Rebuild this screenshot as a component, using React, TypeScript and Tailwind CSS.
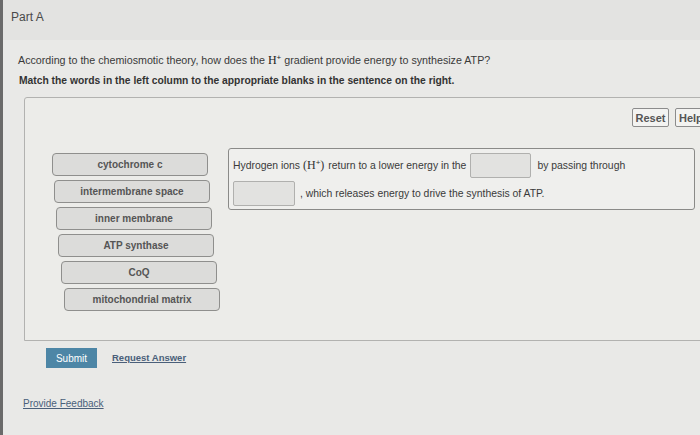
export default function App() {
  const items = [
    { label: 'cytochrome c', ml: 'ml-[0px]' },
    { label: 'intermembrane space', ml: 'ml-[2px]' },
    { label: 'inner membrane', ml: 'ml-[4px]' },
    { label: 'ATP synthase', ml: 'ml-[6px]' },
    { label: 'CoQ', ml: 'ml-[9px]' },
    { label: 'mitochondrial matrix', ml: 'ml-[12px]' },
  ];

  return (
    <div className="w-[700px] h-[435px] overflow-hidden flex bg-[#e9e9e7] font-['Liberation_Sans',Arial,sans-serif] text-[#333]">
      <div className="w-[3px] shrink-0 bg-[#6a6a6a]" />
      <div className="flex-1 flex flex-col min-w-0">
        {/* header */}
        <div className="h-[40px] shrink-0 bg-[#e3e3e1] pl-[8px] pt-[8px] text-[12px] text-[#4a4a4a]">
          Part A
        </div>

        <div className="pl-[15px] pt-[11px] text-[10.7px] text-[#3a3a3a]">
          According to the chemiosmotic theory, how does the{' '}
          <span className="font-['Liberation_Serif',serif] text-[12px] text-[#222]">
            H<sup className="text-[8px] font-['Liberation_Sans',sans-serif]">+</sup>
          </span>{' '}
          gradient provide energy to synthesize ATP?
        </div>
        <div className="pl-[16px] pt-[4px] text-[10.3px] font-bold text-[#333]">
          Match the words in the left column to the appropriate blanks in the sentence on the right.
        </div>

        {/* main box */}
        <div className="ml-[21px] mt-[9px] h-[244px] w-[700px] border border-[#b2b2b0] rounded-tl-[3px] bg-[#ecece9] flex flex-col">
          <div className="flex justify-end gap-[6px] pt-[10px] pr-[16px]">
            <div className="border border-[#8c8c8c] rounded-[2px] bg-[#f3f3f1] w-[37px] h-[19px] flex items-center justify-center text-[11px] font-bold text-[#555]">
              Reset
            </div>
            <div className="border border-[#8c8c8c] rounded-[2px] bg-[#f3f3f1] pl-[3px] w-[32px] h-[19px] flex items-center text-[11px] font-bold text-[#555]">
              Help
            </div>
          </div>

          <div className="flex pt-[21px]">
            <div className="flex flex-col gap-[4px] pl-[27px] pt-[5px]">
              {items.map((it) => (
                <div
                  key={it.label}
                  className={`${it.ml} w-[156px] h-[23px] rounded-[4px] border border-[#8f8f8d] bg-[#dcdcda] flex items-center justify-center text-[10px] font-bold text-[#555]`}
                >
                  {it.label}
                </div>
              ))}
            </div>

            <div className="ml-[8px] w-[467px] h-[62px] border border-[#8a8a88] rounded-[3px] bg-[#efefed] pl-[4px] pt-[3px] text-[10.4px] text-[#3a3a3a]">
              <div className="flex items-center h-[26px]">
                <span>Hydrogen ions</span>
                <span className="ml-[3px] font-['Liberation_Serif',serif] text-[12px] text-[#333]">
                  (H<sup className="text-[8px] font-['Liberation_Sans',sans-serif]">+</sup>)
                </span>
                <span className="ml-[4px]">return to a lower energy in the</span>
                <div className="ml-[4px] w-[61px] h-[25px] border border-[#b0b0ae] rounded-[2px] bg-[#e2e2e0]" />
                <span className="ml-[6px]">by passing through</span>
              </div>
              <div className="flex items-center h-[28px] mt-[1px]">
                <div className="w-[62px] h-[25px] border border-[#b0b0ae] rounded-[2px] bg-[#e2e2e0]" />
                <span className="ml-[5px]">, which releases energy to drive the synthesis of ATP.</span>
              </div>
            </div>
          </div>
        </div>

        {/* actions */}
        <div className="flex items-center pl-[43px] pt-[7px]">
          <div className="w-[51px] h-[20px] bg-[#4d86a6] text-white text-[10px] flex items-center justify-center">
            Submit
          </div>
          <span className="ml-[15px] text-[9.5px] font-bold text-[#4a5f7a] underline">Request Answer</span>
        </div>
        <div className="pl-[20px] pt-[28px] text-[10px] text-[#4a5f7a] underline">Provide Feedback</div>
      </div>
    </div>
  );
}
